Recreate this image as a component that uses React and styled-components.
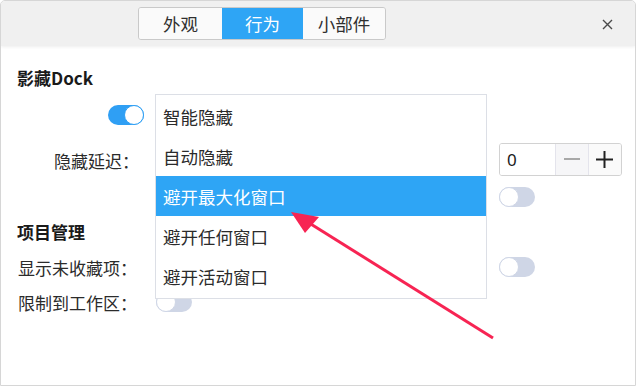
import React from "react";
import styled, { createGlobalStyle } from "styled-components";

const GlobalStyle = createGlobalStyle`
  html, body {
    margin: 0;
    padding: 0;
    background: #ffffff;
  }
  body {
    font-family: "Noto Sans CJK SC", "Noto Sans", sans-serif;
    color: #2b2b2b;
  }
`;

const BLUE = "#2ea5f5";

const Window = styled.div`
  position: relative;
  width: 636px;
  height: 386px;
  box-sizing: border-box;
  border: 1px solid #d6d6d6;
  border-radius: 5px 5px 0 0;
  overflow: hidden;
  background: #ffffff;
`;

const Header = styled.div`
  height: 45px;
  box-sizing: border-box;
  background: #f0f0f0;
  display: flex;
  align-items: flex-start;
  padding: 6px 0 0 137px;
  box-shadow: 0 1px 3px rgba(0, 0, 0, 0.07);
  position: relative;
  z-index: 1;
`;

const Tabs = styled.div`
  display: flex;
  border: 1px solid #c9c9c9;
  border-radius: 3px;
  overflow: hidden;
`;

const Tab = styled.div`
  width: ${(p) => p.w}px;
  height: 31px;
  display: flex;
  align-items: center;
  justify-content: center;
  font-size: 17.5px;
  background: ${(p) => (p.active ? BLUE : "#fafafa")};
  color: ${(p) => (p.active ? "#ffffff" : "#2f2f2f")};
`;

const Close = styled.div`
  margin-left: auto;
  margin-right: 22px;
  margin-top: 11px;
  width: 12px;
  height: 12px;
  display: flex;
  align-items: center;
  justify-content: center;
`;

const Body = styled.div`
  padding-top: 16px;
`;

const Title = styled.div`
  height: ${(p) => p.h}px;
  display: flex;
  align-items: center;
  padding-left: 16px;
  font-size: 17px;
  font-weight: 700;
  color: #1a1a1a;
`;

const Row = styled.div`
  height: ${(p) => p.h}px;
  display: grid;
  grid-template-columns: 126px 331px 1fr;
  column-gap: 12px;
  align-items: center;
  padding-left: 17px;
`;

const Label = styled.div`
  text-align: right;
  padding-right: 5px;
  font-size: 17px;
  color: #2b2b2b;
  white-space: nowrap;
`;

const LeftLabel = styled(Label)`
  text-align: left;
  padding-right: 0;
`;

const Cell = styled.div`
  grid-column: ${(p) => p.col};
  display: flex;
  align-items: center;
  justify-content: ${(p) => p.justify || "flex-start"};
`;

const Toggle = styled.div`
  position: relative;
  width: 36px;
  height: 20px;
  border-radius: 10px;
  box-sizing: border-box;
  background: ${(p) => (p.on ? "#2f9ff4" : "#cfd6e6")};

  &::after {
    content: "";
    position: absolute;
    top: 0;
    ${(p) => (p.on ? "right: 0;" : "left: 0;")}
    width: 20px;
    height: 20px;
    border-radius: 50%;
    box-sizing: border-box;
    background: #ffffff;
    border: 1px solid ${(p) => (p.on ? "#2f9ff4" : "#cfd6e6")};
  }
`;

const Spin = styled.div`
  display: flex;
  height: 33px;
  width: 123px;
  box-sizing: border-box;
  border: 1px solid #d2d2d2;
  border-radius: 3px;
  overflow: hidden;
  margin-top: -2px;
`;

const SpinValue = styled.div`
  width: 56px;
  display: flex;
  align-items: center;
  padding-left: 7px;
  box-sizing: border-box;
  font-family: "Noto Sans", sans-serif;
  font-size: 17px;
  color: #1a1a1a;
  background: #ffffff;
`;

const SpinButton = styled.div`
  width: 33px;
  display: flex;
  align-items: center;
  justify-content: center;
  border-left: 1px solid #e4e4ec;
  background: ${(p) => p.bg};
`;

const Popup = styled.div`
  position: absolute;
  left: 154px;
  top: 93px;
  width: 332px;
  box-sizing: border-box;
  border: 1px solid #dcdfe6;
  background: #ffffff;
  padding: 1px 0 2px;
  z-index: 2;
`;

const Item = styled.div`
  height: 40px;
  display: flex;
  align-items: center;
  padding-left: 7px;
  font-size: 17.5px;
  background: ${(p) => (p.active ? BLUE : "transparent")};
  color: ${(p) => (p.active ? "#ffffff" : "#2b2b2b")};
`;

const Overlay = styled.svg`
  position: absolute;
  left: 0;
  top: 0;
  pointer-events: none;
  z-index: 3;
`;

const items = ["智能隐藏", "自动隐藏", "避开最大化窗口", "避开任何窗口", "避开活动窗口"];

export default function App() {
  return (
    <>
      <GlobalStyle />
      <Window>
        <Header>
          <Tabs>
            <Tab w={83}>外观</Tab>
            <Tab w={81} active>行为</Tab>
            <Tab w={82}>小部件</Tab>
          </Tabs>
          <Close>
            <svg width="11" height="11" viewBox="0 0 11 11">
              <path d="M1 1 L10 10 M10 1 L1 10" stroke="#4a4a4a" strokeWidth="1.4" />
            </svg>
          </Close>
        </Header>
        <Body>
          <Title h={30}>影藏Dock</Title>
          <Row h={46}>
            <Cell col={1} justify="flex-end">
              <Toggle on />
            </Cell>
          </Row>
          <Row h={44}>
            <Label>隐藏延迟：</Label>
            <Cell col={3}>
              <Spin>
                <SpinValue>0</SpinValue>
                <SpinButton bg="#f6f6f8">
                  <svg width="16" height="2" viewBox="0 0 16 2">
                    <rect width="16" height="2" fill="#a8a8a8" />
                  </svg>
                </SpinButton>
                <SpinButton bg="#fafafa">
                  <svg width="17" height="17" viewBox="0 0 17 17">
                    <path d="M8.5 0 V17 M0 8.5 H17" stroke="#222" strokeWidth="2" />
                  </svg>
                </SpinButton>
              </Spin>
            </Cell>
          </Row>
          <Row h={30}>
            <Cell col={3}>
              <Toggle />
            </Cell>
          </Row>
          <Title h={38}>项目管理</Title>
          <Row h={34}>
            <LeftLabel>显示未收藏项：</LeftLabel>
            <Cell col={3}>
              <Toggle />
            </Cell>
          </Row>
          <Row h={36}>
            <LeftLabel>限制到工作区：</LeftLabel>
            <Cell col={2}>
              <Toggle />
            </Cell>
          </Row>
        </Body>

        <Popup>
          {items.map((t, i) => (
            <Item key={t} active={i === 2}>
              {t}
            </Item>
          ))}
        </Popup>

        <Overlay width="636" height="386">
          <line x1="492" y1="337" x2="305" y2="220" stroke="#f72453" strokeWidth="3" />
          <polygon points="290,211 318,216 304,232" fill="#f72453" />
        </Overlay>
      </Window>
    </>
  );
}
